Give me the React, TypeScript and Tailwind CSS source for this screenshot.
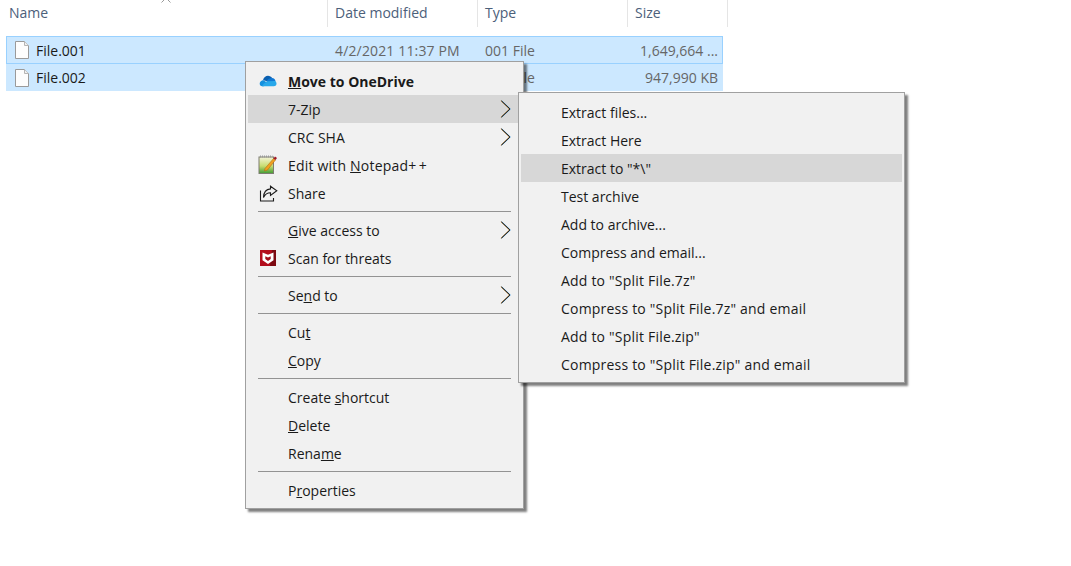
import type { ReactNode } from 'react'

const font = 'font-["Open_Sans","Noto_Sans",sans-serif]'

function FileIcon() {
  return (
    <svg width="16" height="20" viewBox="0 0 16 20" className="shrink-0">
      <path d="M1.500 1.500h9l4 4v13h-13z" fill="#fdfdfd" stroke="#9a9a9a" />
      <path d="M10.500 1.500v4h4" fill="#f0f0f0" stroke="#b5b5b5" />
    </svg>
  )
}

function OneDriveIcon() {
  return (
    <svg width="18" height="12" viewBox="0 0 18 12">
      <path d="M4 5.200C4.600 2.400 6.800.8 9 .8c1.800 0 3.200.9 4.100 2.300L9.500 6.500z" fill="#0a5fb0" />
      <path d="M.8 9.500C.3 7.500 1.800 5.200 4.400 5.200l4 2.500L5 11.200H3C2 11.200 1.200 10.500.8 9.500z" fill="#1490df" />
      <path d="M13 3c2 .1 3.300 1.500 3.500 3.300L10 8 7.500 6.300C8.500 4.300 10.500 2.900 13 3z" fill="#0f78d4" />
      <path d="M3 11.200h11.800c1.800 0 2.900-1.300 2.700-3-.1-1-.6-1.700-1.200-2.200L8 6.200 4.500 9z" fill="#28a8ea" />
    </svg>
  )
}

function NotepadIcon() {
  return (
    <svg width="20" height="20" viewBox="0 0 20 20">
      <defs>
        <linearGradient id="npp" x1="0" y1="0" x2="0" y2="1">
          <stop offset="0" stopColor="#f4f4d8" />
          <stop offset="0.55" stopColor="#c8dc70" />
          <stop offset="1" stopColor="#3f9a34" />
        </linearGradient>
      </defs>
      <rect x="1" y="2" width="14.500" height="16.500" fill="url(#npp)" stroke="#7d7d70" />
      <path d="M2 1.500h12.500" stroke="#9a9a9a" strokeDasharray="1 1" strokeWidth="2" />
      <path d="M7 13.500 15.500 3.500 17.500 5 9.500 15 6.500 16z" fill="#f0a020" stroke="#a86010" strokeWidth="0.5" />
      <path d="M15.500 3.500 17 1.500 19 3 17.500 5z" fill="#a01828" />
    </svg>
  )
}

function ShareIcon() {
  return (
    <svg width="19" height="17" viewBox="0 0 19 17" fill="none" stroke="#1c1c1c" strokeWidth="1.100">
      <path d="M1.500 5.500v10.500h13v-3" />
      <path d="M11.500 1.200 17.800 5.800 11.500 10.500V7.800C8 7.800 6 9.500 4.500 12.500 4.700 8 7 4.200 11.500 3.900z" />
    </svg>
  )
}

function McAfeeIcon() {
  return (
    <svg width="16" height="16" viewBox="0 0 16 16">
      <rect width="16" height="16" fill="#b30d1c" />
      <path d="M12 0h4v16h-6z" fill="#7c0a12" />
      <path d="M2.500 2.500 8 4.800l5.500-2.300v7.700L8 14 2.500 10.200z" fill="#ffffff" />
      <path d="M5.300 6.300 8 7.500l2.700-1.200v2.700L8 10.900 5.300 9z" fill="#a30d1a" />
    </svg>
  )
}

function Chevron() {
  return (
    <svg width="12" height="18" viewBox="0 0 12 18" fill="none" className="shrink-0">
      <path d="M.8 .8 9.400 9 .8 17.200" stroke="#e39a3c" strokeOpacity="0.8" />
      <path d="M1.800 .8 10.400 9 1.800 17.200" stroke="#2b90d9" strokeOpacity="0.8" />
      <path d="M1.300 .8 9.900 9 1.300 17.200" stroke="#101010" />
    </svg>
  )
}

type Item = {
  label: ReactNode
  icon?: ReactNode
  arrow?: boolean
  active?: boolean
}

function Row({ item }: { item: Item }) {
  return (
    <div className={`flex h-7 items-center pr-[7px] ${item.active ? 'bg-[#d7d7d7]' : ''}`}>
      <span className="flex w-10 shrink-0 justify-center">{item.icon}</span>
      <span className="flex-1 whitespace-nowrap">{item.label}</span>
      {item.arrow && <Chevron />}
    </div>
  )
}

function Sep() {
  return <div className="mb-1 ml-[10px] mr-2 mt-1 h-px bg-[#939393]" />
}

const sections: Item[][] = [
  [
    { label: <span className="font-bold"><u>M</u>ove to OneDrive</span>, icon: <OneDriveIcon /> },
    { label: '7-Zip', arrow: true, active: true },
    { label: 'CRC SHA', arrow: true },
    {
      label: (
        <span className="tracking-[0.2px]">
          Edit with <u>N</u>otepad<span className="tracking-[2.500px]">++</span>
        </span>
      ),
      icon: <NotepadIcon />,
    },
    { label: 'Share', icon: <ShareIcon /> },
  ],
  [
    { label: <><u>G</u>ive access to</>, arrow: true },
    { label: 'Scan for threats', icon: <McAfeeIcon /> },
  ],
  [{ label: <>Se<u>n</u>d to</>, arrow: true }],
  [
    { label: <>Cu<u>t</u></> },
    { label: <><u>C</u>opy</> },
  ],
  [
    { label: <>Create <u>s</u>hortcut</> },
    { label: <><u>D</u>elete</> },
    { label: <>Rena<u>m</u>e</> },
  ],
  [{ label: <>P<u>r</u>operties</> }],
]

const zipItems = [
  'Extract files...',
  'Extract Here',
  'Extract to "*\\"',
  'Test archive',
  'Add to archive...',
  'Compress and email...',
  'Add to "Split File.7z"',
  'Compress to "Split File.7z" and email',
  'Add to "Split File.zip"',
  'Compress to "Split File.zip" and email',
]

const menuBox =
  'absolute border border-[#a0a0a0] bg-[#f1f1f1] text-[14px] text-[#1a1a1a] shadow-[3px_3px_2px_rgba(0,0,0,0.5)]'

function FileRow({ name, date, size, first }: { name: string; date?: string; size: string; first?: boolean }) {
  return (
    <div
      className={`ml-[6px] flex w-[717px] items-center bg-[#cce8ff] text-[14px] text-[#666666] ${
        first ? 'h-[28px] border border-[#99d1ff]' : 'h-[27px] px-px'
      }`}
    >
      <div className="flex w-[320px] items-center gap-[6px] pl-[7px] text-[#1a1a1a]">
        <FileIcon />
        <span>{name}</span>
      </div>
      <div className="w-[150px] pl-[8px] tracking-[0.15px]">{date}</div>
      <div className="w-[150px] pl-[8px]">001 File</div>
      <div className="flex-1 whitespace-nowrap pr-1 text-right">{size}</div>
    </div>
  )
}

export default function App() {
  return (
    <div className={`relative h-[566px] w-[1071px] overflow-hidden bg-white ${font}`}>
      {/* Header */}
      <div className="flex h-[27px] items-center text-[14px] text-[#4c607a]">
        <div className="h-full w-[328px] border-r border-[#e5e5e5] pl-[9px] leading-[26px]">Name</div>
        <div className="h-full w-[150px] border-r border-[#e5e5e5] pl-[7px] leading-[26px]">Date modified</div>
        <div className="h-full w-[150px] border-r border-[#e5e5e5] pl-[7px] leading-[26px]">Type</div>
        <div className="h-full w-[100px] border-r border-[#e5e5e5] pl-[7px] leading-[26px]">Size</div>
      </div>
      <svg width="10" height="3" viewBox="0 0 10 3" className="absolute left-[161px] top-0" fill="none" stroke="#9a9a9a">
        <path d="M.5 2.500 3 0M9.500 2.500 7 0" />
      </svg>

      {/* Files */}
      <div className="mt-[9px]">
        <FileRow first name="File.001" date="4/2/2021 11:37 PM" size="1,649,664 ..." />
        <FileRow name="File.002" size="947,990 KB" />
      </div>

      {/* Context menu */}
      <div className={`${menuBox} left-[245px] top-[61px] w-[279px] pb-1 pl-[2px] pr-1 pt-[5px]`}>
        {sections.map((items, i) => (
          <div key={i}>
            {items.map((item, j) => (
              <Row key={j} item={item} />
            ))}
            {i < sections.length - 1 && <Sep />}
          </div>
        ))}
      </div>

      {/* 7-Zip submenu */}
      <div className={`${menuBox} left-[518px] top-[92px] w-[387px] pb-1 pl-[2px] pr-[2px] pt-[5px]`}>
        {zipItems.map((label, i) => (
          <div
            key={label}
            className={`flex h-7 items-center whitespace-nowrap pl-[40px] ${i === 2 ? 'bg-[#d7d7d7]' : ''} ${
              label.includes('Split') ? 'tracking-[0.2px]' : ''
            }`}
          >
            {label}
          </div>
        ))}
      </div>
    </div>
  )
}
